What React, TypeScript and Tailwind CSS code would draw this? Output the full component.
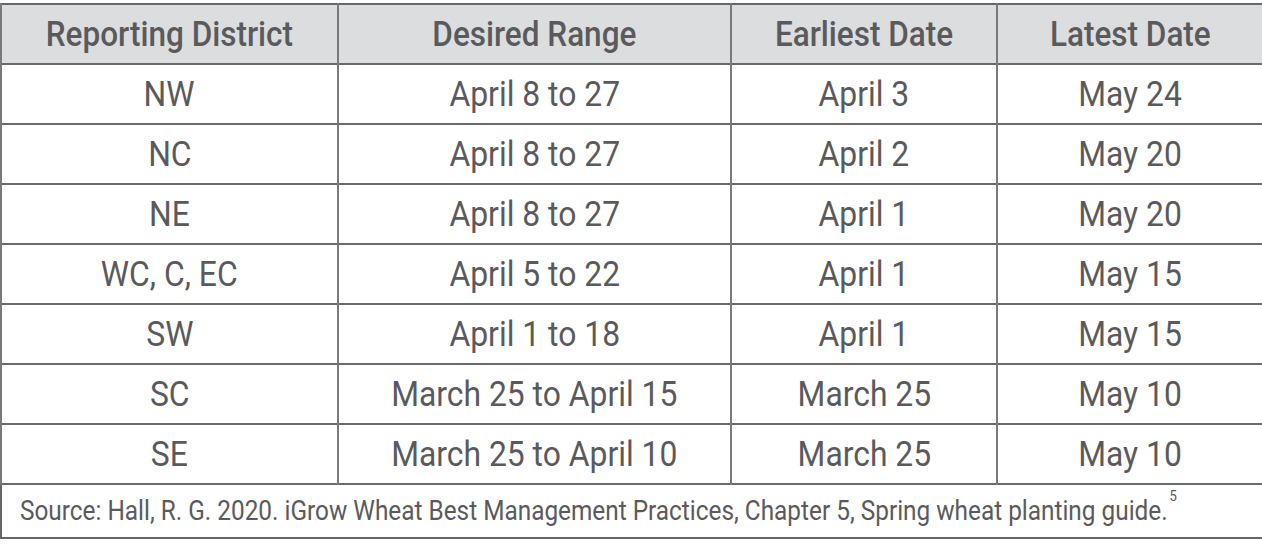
import React from "react";

const rows: [string, string, string, string][] = [
  ["NW", "April 8 to 27", "April 3", "May 24"],
  ["NC", "April 8 to 27", "April 2", "May 20"],
  ["NE", "April 8 to 27", "April 1", "May 20"],
  ["WC, C, EC", "April 5 to 22", "April 1", "May 15"],
  ["SW", "April 1 to 18", "April 1", "May 15"],
  ["SC", "March 25 to April 15", "March 25", "May 10"],
  ["SE", "March 25 to April 10", "March 25", "May 10"],
];

const headers = ["Reporting District", "Desired Range", "Earliest Date", "Latest Date"];

function Cell({ children, head }: { children: React.ReactNode; head?: boolean }) {
  return (
    <td
      className={
        "h-[60px] p-0 text-center align-middle border-x-2 border-x-[#7a7a7a] overflow-hidden " +
        (head ? "bg-[#dcddde] font-medium" : "bg-white font-normal")
      }
    >
      <span className={"inline-block whitespace-nowrap origin-center " + (head ? "scale-x-[0.9]" : "scale-x-[0.91]")}>{children}</span>
    </td>
  );
}

export default function App() {
  return (
    <div className="w-[1262px] h-[554px] bg-white pt-[3px] overflow-hidden" style={{ fontFamily: "Roboto, 'Liberation Sans', sans-serif" }}>
      <table className="w-[1262px] border-collapse table-fixed border-2 border-[#666666] text-[35px] text-[#5a5a5c] leading-none">
        <colgroup>
          <col className="w-[337px]" />
          <col className="w-[393px]" />
          <col className="w-[266px]" />
          <col className="w-[266px]" />
        </colgroup>
        <tbody>
          <tr className="border-b-2 border-[#6a6a6a]">
            {headers.map((h) => (
              <Cell key={h} head>
                {h}
              </Cell>
            ))}
          </tr>
          {rows.map((r, i) => (
            <tr key={i} className="border-b-2 border-[#6a6a6a]">
              {r.map((c, j) => (
                <Cell key={j}>{c}</Cell>
              ))}
            </tr>
          ))}
          <tr>
            <td colSpan={4} className="h-[54px] p-0 pl-[18px] text-left align-middle text-[28px] overflow-hidden">
              <span className="inline-block whitespace-nowrap scale-x-[0.87] origin-left">
                Source: Hall, R. G. 2020. iGrow Wheat Best Management Practices, Chapter 5, Spring wheat planting guide.<sup className="text-[15px] align-top relative top-[-1px] ml-[2px]">5</sup>
              </span>
            </td>
          </tr>
        </tbody>
      </table>
    </div>
  );
}
